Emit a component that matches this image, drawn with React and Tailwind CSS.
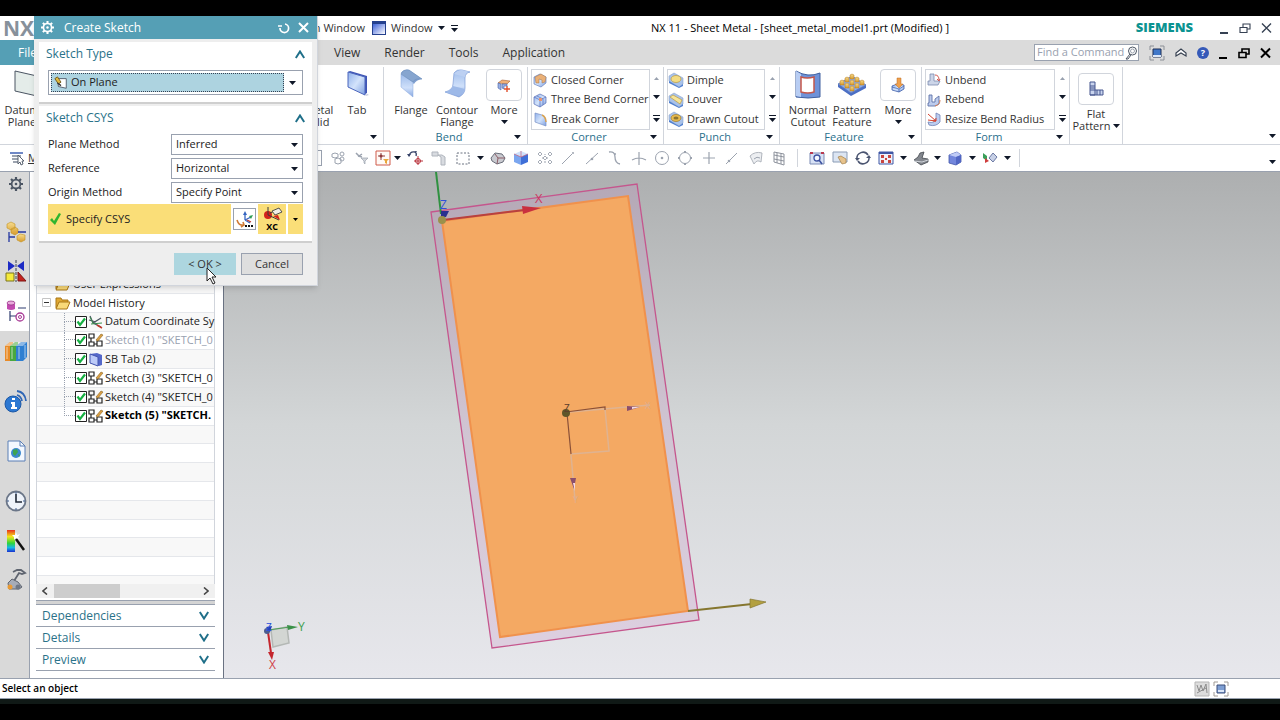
import { useState } from 'react';

/* ---------- small glyphs ---------- */

const Caret = ({ className = 'fill-gray-900' }) => (
  <svg width="7" height="4" viewBox="0 0 7 4" className={className} aria-hidden="true">
    <path d="M0 0h7L3.500 4z" />
  </svg>
);

const CaretUp = () => (
  <svg width="5" height="3" viewBox="0 0 5 3" className="fill-gray-400" aria-hidden="true">
    <path d="M0 3h5L2.500 0z" />
  </svg>
);

const CaretBar = () => (
  <svg width="7" height="7" viewBox="0 0 7 7" className="fill-gray-900" aria-hidden="true">
    <path d="M0 0h7v1H0zM0 3h7L3.500 7z" />
  </svg>
);

const Chevron = ({ up = false }) => (
  <svg width="10" height="9" viewBox="0 0 10 9" fill="none" stroke="#1f6f89" strokeWidth="2" aria-hidden="true">
    <path d={up ? 'M0.800 8L5 1.500L9.200 8' : 'M0.800 1L5 7.500L9.200 1'} />
  </svg>
);

const Svg = ({ size = 16, box = 16, children }) => (
  <svg width={size} height={size} viewBox={`0 0 ${box} ${box}`} fill="none" className="shrink-0" aria-hidden="true">
    {children}
  </svg>
);

const Defs = () => (
  <svg width="0" height="0" className="absolute" aria-hidden="true">
    <defs>
      <linearGradient id="steel" x1="0" y1="0" x2="1" y2="1">
        <stop offset="0" stopColor="#8fb0ea" />
        <stop offset="0.500" stopColor="#d3e3fb" />
        <stop offset="1" stopColor="#7d9fe0" />
      </linearGradient>
      <linearGradient id="steelV" x1="0" y1="0" x2="0" y2="1">
        <stop offset="0" stopColor="#9dbbea" />
        <stop offset="0.600" stopColor="#cfe0fa" />
        <stop offset="1" stopColor="#88a8e2" />
      </linearGradient>
      <linearGradient id="gold" x1="0" y1="0" x2="0" y2="1">
        <stop offset="0" stopColor="#f6dc8e" />
        <stop offset="1" stopColor="#d79b2c" />
      </linearGradient>
      <linearGradient id="spectrum" x1="0" y1="0" x2="0" y2="1">
        <stop offset="0" stopColor="#e8301c" />
        <stop offset="0.300" stopColor="#f5e51b" />
        <stop offset="0.600" stopColor="#2fd43a" />
        <stop offset="0.800" stopColor="#16b7e8" />
        <stop offset="1" stopColor="#1b2fd0" />
      </linearGradient>
      <linearGradient id="glass" x1="0" y1="0" x2="1" y2="1">
        <stop offset="0" stopColor="#3f63d8" />
        <stop offset="1" stopColor="#ffffff" />
      </linearGradient>
    </defs>
  </svg>
);

/* ---------- ribbon icons ---------- */

const DatumPlaneIcon = () => (
  <Svg size={32} box={32}>
    <path d="M9 2l22 5v20L9 22z" fill="#e4ece9" stroke="#4b5563" />
  </Svg>
);

const MetalSolidIcon = () => (
  <Svg size={32} box={32}>
    <path d="M8 6l22 3v13L8 23z" fill="url(#steel)" stroke="#5472b8" />
  </Svg>
);

const TabIcon = () => (
  <Svg size={32} box={32}>
    <path d="M24 27l4-1-2-1z" fill="#b9bfd4" />
    <path d="M7 3l2-1 17 5v17l-2 1z" fill="#3f55b5" />
    <path d="M7 3l17 5v18L7 18z" fill="url(#steel)" stroke="#4c66bd" />
  </Svg>
);

const FlangeIcon = () => (
  <Svg size={32} box={32}>
    <path d="M6 4q3-4 8-3l13 9q-6 1-8 5z" fill="#7f9fd0" />
    <path d="M6 5l12 8v15L6 18z" fill="url(#steelV)" stroke="#8aa8dd" strokeWidth="0.500" />
    <path d="M14 1q-6-1-8 4l12 8q2-4 9-3z" fill="#86a5cf" stroke="#6f90bd" strokeWidth="0.600" />
  </Svg>
);

const ContourIcon = () => (
  <Svg size={32} box={32}>
    <path d="M13 4q3-4 8-3l8 2q-5 1-5 6v10q0 6-6 9L4 23q8-2 8-8z" fill="url(#steelV)" stroke="#7c9bd6" strokeWidth="0.700" />
    <path d="M4 23q6-1 8-6l12 3q-2 5-6 7z" fill="#9db9e8" />
    <path d="M13 5q3-4 8-4l8 2q-5 0-5 5z" fill="#bcd0f2" />
  </Svg>
);

const MoreBendIcon = () => (
  <Svg>
    <path d="M2 6l4-3 8 1-3 3z" fill="#f0b178" stroke="#a45f37" strokeWidth="0.600" />
    <path d="M2 6l3 1v6l-3-2zM6 7h5v2H8v3l-2-1z" fill="#9ab1e4" stroke="#4863aa" strokeWidth="0.600" />
    <path d="M11 9v6M8 12h6" stroke="#e1512e" strokeWidth="1.400" />
  </Svg>
);

const MoreFeatureIcon = () => (
  <Svg>
    <path d="M2 9l5-2 7 1v4l-5 3-7-2z" fill="url(#steel)" stroke="#3e5da8" strokeWidth="0.800" />
    <path d="M2 10l7 2 5-3M9 12v3" stroke="#3e5da8" strokeWidth="0.700" />
    <path d="M7 1h4v6h2l-4 4-4-4h2z" fill="#f0a04b" stroke="#b96a20" strokeWidth="0.500" />
  </Svg>
);

const FlatPatternIcon = () => (
  <Svg>
    <path d="M2 1h5v6H2zM2 7h5v7H2zM7 9h8v5H7z" fill="#c9d4ee" />
    <path d="M2 1h5v13H2zM2 5h5M2 7h5M2 9h13v5H2M9 9v5M12 9v5" stroke="#47578f" />
  </Svg>
);

const NormalCutoutIcon = () => (
  <Svg size={32} box={32}>
    <path d="M4 2q12 7 24 2v24q-12 2-24 0z" fill="#6f92d8" stroke="#40609f" />
    <path d="M4 2q3 2 5 3v23l-5-1z" fill="#b8cdf3" />
    <path d="M9 8q6 2 13 0v15q-6 2-13 0z" fill="#fff" stroke="#c4564a" strokeWidth="1.500" />
  </Svg>
);

const PatternIcon = () => (
  <Svg size={32} box={32}>
    <path d="M2 15l14-8 14 9-15 8z" fill="#8fb0ea" stroke="#4465b5" strokeWidth="0.700" />
    <path d="M2 15l13 9 15-8v3L15 27 2 18z" fill="#4c6fc4" />
    {[[16, 6], [11, 9], [21, 9], [6, 12], [16, 12], [26, 12], [11, 15], [21, 15], [16, 18]].map(([x, y]) => (
      <path key={`${x}-${y}`} d={`M${x - 2} ${y}q2-2 4 0v4h-4z`} fill="url(#gold)" stroke="#b57a24" strokeWidth="0.500" />
    ))}
  </Svg>
);

const CornerIcon = ({ kind }) => (
  <Svg>
    {kind === 'closed' && (
      <>
        <path d="M2 5l6-3 6 3v6l-5 4-7-3z" fill="url(#steel)" stroke="#6a83bd" strokeWidth="0.700" />
        <path d="M3 5l6-3 5 3-1 5-3 1V8L7 7v4H4z" fill="#eab077" stroke="#a9784a" strokeWidth="0.500" />
      </>
    )}
    {kind === 'three' && (
      <>
        <path d="M2 5l6-3 6 3v6l-6 4-6-3z" fill="url(#steel)" stroke="#596fb5" strokeWidth="0.700" />
        <path d="M2 5l6 3v7M8 8l6-3M5 4l6 3v6" stroke="#6079c4" strokeWidth="0.800" />
        <path d="M7 6h3v3H7z" fill="#e79772" />
      </>
    )}
    {kind === 'break' && (
      <>
        <path d="M3 2l7 2q4 2 4 7v4L3 11z" fill="url(#steel)" stroke="#7890c6" strokeWidth="0.700" />
        <path d="M10 4q4 2 4 7" stroke="#d9a24f" strokeWidth="1.500" />
      </>
    )}
  </Svg>
);

const PunchIcon = ({ kind }) => (
  <Svg>
    <path d="M1 4l5-3 9 5v6l-4 3-10-6z" fill="#a9c2ea" stroke="#8ba4cd" strokeWidth="0.600" />
    <path d="M1 9l10 6 4-3v2l-4 2-10-5z" fill="#4f7fd0" />
    {kind === 'dimple' && <ellipse cx="8" cy="7" rx="5" ry="3.500" fill="#f3dc84" stroke="#bd9c3c" strokeWidth="0.700" />}
    {kind === 'louver' && <path d="M2 5l3-2 9 5-2 4z" fill="#f6e49a" stroke="#bd9c3c" strokeWidth="0.700" />}
    {kind === 'drawn' && (
      <>
        <ellipse cx="8" cy="7" rx="5" ry="3.500" fill="#e8bb4e" stroke="#a07a28" strokeWidth="0.700" />
        <ellipse cx="8" cy="7" rx="2.500" ry="1.500" fill="#8b7433" />
      </>
    )}
  </Svg>
);

const FormIcon = ({ kind }) => (
  <Svg>
    {kind === 'unbend' && (
      <>
        <path d="M4 2h4v7h6l-2 4H2V9h2z" fill="#ccd5e8" stroke="#7b8aae" strokeWidth="0.800" />
        <path d="M9 3q4 0 4 5M11 7l2 2 1-2" stroke="#d1574f" />
      </>
    )}
    {kind === 'rebend' && (
      <>
        <path d="M3 3h3v7h3V7l4-3v8l-4 2H2v-3h1z" fill="#bccbec" stroke="#5f73a8" strokeWidth="0.900" />
        <path d="M9 14q5-1 5-6" stroke="#d98058" />
      </>
    )}
    {kind === 'resize' && (
      <>
        <path d="M10 2l4 2v7q-4 5-11 3l-1-3q7 2 8-4z" fill="#bccdf0" stroke="#6f82b5" strokeWidth="0.800" />
        <path d="M2 3l8 7M2 9l8 1M7 10h3V7" stroke="#d6402b" />
      </>
    )}
  </Svg>
);

/* ---------- selection bar icons ---------- */

const gray = '#9ca3af';

const barIcons = {
  menu: (
    <Svg>
      <path d="M1 3h13M3 6h9M3 9h7M4 12h6" stroke="#7e8697" strokeWidth="1.500" />
      <path d="M1 2h13v2H1z" fill="#6f88c6" />
      <path d="M9 5v9l2-2 1 3 2-1-1-3h2z" fill="#fff" stroke="#4b5563" strokeWidth="0.900" />
    </Svg>
  ),
  assembly: (
    <Svg>
      <path d="M2 4l3-1 3 1v3L5 8 2 7zM5 9l3-1 3 1v4l-3 1-3-1z" stroke={gray} />
      <circle cx="12" cy="4" r="2" stroke={gray} />
      <circle cx="12" cy="9" r="2" stroke={gray} />
    </Svg>
  ),
  filterOff: (
    <Svg>
      <path d="M2 3l3 3 3-2M4 6l4 1" stroke={gray} strokeWidth="1.500" />
      <path d="M7 8h7l-3 3v3l-1-1v-2z" fill="#d1d5db" stroke={gray} strokeWidth="0.700" />
    </Svg>
  ),
  filter: (
    <Svg>
      <path d="M1 1h14v14H1z" fill="#fffaf6" stroke="#cf5a4a" />
      <path d="M6 3v7M3 6h7" stroke="#8f3b3b" />
      <circle cx="6" cy="6" r="1.500" fill="#8f3b3b" />
      <path d="M8 9h6l-2 2v3l-2-1v-2z" fill="#e9a63a" />
    </Svg>
  ),
  reset: (
    <Svg>
      <path d="M2 6q1-5 6-4 2 1 1 4M9 2v-1" stroke="#374469" strokeWidth="1.300" />
      <path d="M0 4l2 3 2-3z" fill="#374469" />
      <path d="M11 6v9M7 11h9" stroke="#b9323c" />
      <circle cx="11" cy="11" r="2.500" stroke="#b9323c" />
    </Svg>
  ),
  path: (
    <Svg>
      <path d="M1 2h6v4H1zM7 5l3 2v8h4V7l-3-2z" fill="#d8dbe0" stroke="#b0b5bd" />
    </Svg>
  ),
  marquee: (
    <Svg>
      <path d="M2 3h12v11H2z" stroke="#6b7280" strokeDasharray="2 1.500" />
    </Svg>
  ),
  solid: (
    <Svg>
      <path d="M1 8l4-5 7 1 3 4-2 4-6 2-5-3z" fill="#c9cad0" stroke="#6b6f7b" />
      <path d="M5 4l3 4 7 0M8 8l-1 6" stroke="#8b5d66" />
    </Svg>
  ),
  cube: (
    <Svg>
      <path d="M1 4l7-3 7 3-7 3z" fill="#cfe0fb" />
      <path d="M1 4l7 3v8l-7-3z" fill="#7ba6ef" />
      <path d="M15 4L8 7v8l7-3z" fill="#3f6fd8" />
      <path d="M8 1v6M1 4l7 3 7-3" stroke="#c25b76" strokeWidth="0.700" />
    </Svg>
  ),
  points: (
    <Svg>
      {[[3, 4], [8, 8], [13, 4], [3, 12], [13, 12]].map(([x, y]) => (
        <path key={`${x}-${y}`} d={`M${x - 2} ${y}l2-2 2 2-2 2z`} stroke={gray} strokeWidth="0.900" />
      ))}
      <path d="M5 8h1M10 8h1M8 4v1M8 11v2" stroke={gray} />
    </Svg>
  ),
  endpoint: <Svg><path d="M2 14L12 4" stroke={gray} /><circle cx="13" cy="3" r="1" fill={gray} /></Svg>,
  midpoint: <Svg><path d="M2 14L14 3" stroke={gray} /><circle cx="8" cy="9" r="1.300" fill={gray} /></Svg>,
  spline: <Svg><path d="M2 2q6-1 6 5t5 7" stroke={gray} strokeWidth="1.300" /><circle cx="8" cy="4" r="1" fill={gray} /></Svg>,
  intersect: <Svg><path d="M8 2v13M1 10q7-4 14 0" stroke={gray} strokeWidth="1.200" /></Svg>,
  center: <Svg><circle cx="8" cy="8" r="6.500" stroke={gray} /><circle cx="8" cy="8" r="1.300" fill={gray} /></Svg>,
  quadrant: (
    <Svg>
      <circle cx="8" cy="8" r="5.500" stroke={gray} />
      <path d="M7 1h2v2H7zM7 13h2v2H7zM1 7h2v2H1zM13 7h2v2h-2z" fill={gray} />
    </Svg>
  ),
  existing: <Svg><path d="M8 2v12M2 8h12" stroke={gray} strokeWidth="1.200" /></Svg>,
  onCurve: <Svg><path d="M2 14L13 3" stroke={gray} /><circle cx="5" cy="11" r="1.300" fill={gray} /></Svg>,
  onFace: (
    <Svg>
      <path d="M2 6q5-5 12-3l-1 9q-4-3-7 2z" fill="#eceef1" stroke="#b0b5bd" />
      <path d="M6 9q3-3 6-1" stroke={gray} />
    </Svg>
  ),
  grid: <Svg><path d="M3 2l10 2v11L3 12zM6 3v10M10 3v11M3 5l10 2M3 9l10 2" stroke="#8d929c" /></Svg>,
  fit: (
    <Svg>
      <path d="M1 3h14v11H1z" fill="#d8e2f5" stroke="#7b8bb5" />
      <path d="M1 2h3v2H1zM12 2h3v2h-3z" fill="#b93a50" />
      <circle cx="8" cy="8" r="3" fill="#f4f8ff" stroke="#3d52a0" strokeWidth="1.300" />
      <path d="M10 10l3 4" stroke="#3d52a0" strokeWidth="1.500" />
    </Svg>
  ),
  pan: (
    <Svg>
      <path d="M1 2h14v10H1z" fill="#dce5f2" stroke="#8a9bb5" />
      <path d="M6 7l3-1 5 3v4l-4 1z" fill="#e7c38c" stroke="#a37f49" strokeWidth="0.700" />
    </Svg>
  ),
  rotate: (
    <Svg>
      <path d="M13 5A6 6 0 0 0 2 9M3 11A6 6 0 0 0 14 7" stroke="#4a5470" strokeWidth="1.500" />
      <path d="M0 8l2 3 3-3zM11 8l3-3 2 3z" fill="#4a5470" />
    </Svg>
  ),
  views: (
    <Svg>
      <path d="M1 2h14v12H1z" fill="#eef2fa" stroke="#3f57a5" />
      <path d="M1 2h14v2H1z" fill="#3f57a5" />
      <path d="M3 5h3v3H3zM10 5h3v3h-3zM3 10h3v3H3zM10 10h3v3h-3z" fill="#c8453f" />
      <path d="M7 8h2v2H7z" fill="#c8453f" />
    </Svg>
  ),
  shaded: (
    <Svg>
      <path d="M1 10l4-3 2-4 4-1-2 6 6 1v3l-7 3z" fill="#83878e" stroke="#43474e" strokeWidth="0.800" />
      <path d="M1 11l8 1 6-2" stroke="#d1d5db" />
    </Svg>
  ),
  render: (
    <Svg>
      <path d="M2 5l8-3 4 3v7l-5 3-7-2z" fill="#7286dc" stroke="#4357a8" strokeWidth="0.800" />
      <path d="M2 5l8-3 4 3-5 2z" fill="#bfcbf6" />
      <path d="M9 7l5-2v7l-5 3z" fill="#5166c4" />
    </Svg>
  ),
  section: (
    <Svg>
      <path d="M1 3l4 3v5l-4-3z" fill="#3aa05a" />
      <path d="M3 8l4 3-4 2z" fill="#cf3d3d" />
      <path d="M7 8l4-5 4 4-4 5z" fill="#c7d0e6" stroke="#6d7aa4" />
    </Svg>
  ),
};

const snapIcons = [
  'solid', 'cube', 'points', 'endpoint', 'midpoint', 'spline', 'intersect',
  'center', 'quadrant', 'existing', 'onCurve', 'onFace', 'grid',
];

const BarButton = ({ name, className = 'w-6' }) => (
  <button type="button" aria-label={name} className={`flex items-center justify-center ${className}`}>
    {barIcons[name]}
  </button>
);

const BarDrop = ({ name }) => (
  <button type="button" aria-label={`${name} options`} className="flex w-[11px] items-center justify-center">
    <Caret />
  </button>
);

/* ---------- title bar and tabs ---------- */

const WindowControls = ({ strong = false }) => (
  <div className={`flex items-center gap-[10px] ${strong ? 'text-black' : 'text-gray-700'}`}>
    <button type="button" aria-label="Minimize">
      <svg width="9" height="12" viewBox="0 0 9 12" fill="none" stroke="currentColor" strokeWidth="2" aria-hidden="true">
        <path d="M0 11h8" />
      </svg>
    </button>
    <button type="button" aria-label="Restore">
      <svg width="12" height="12" viewBox="0 0 12 12" fill="none" stroke="currentColor" strokeWidth={strong ? 1.6 : 1.1} aria-hidden="true">
        <path d="M1 5.500h7v5H1zM4 5V2h7v5H8" />
      </svg>
    </button>
    <button type="button" aria-label="Close">
      <svg width="11" height="12" viewBox="0 0 11 12" fill="none" stroke="currentColor" strokeWidth={strong ? 2 : 1.4} aria-hidden="true">
        <path d="M1 1.500l9 9M10 1.500l-9 9" />
      </svg>
    </button>
  </div>
);

const TitleBar = () => (
  <header className="flex h-6 items-center bg-white text-[11px]">
    <div className="flex w-1/2 items-center">
      <span className="w-[200px] pl-[3px] text-[21px] leading-6 font-bold text-[#87919b]">NX</span>
      <button type="button" className="w-[165px] text-right">Switch Window</button>
      <button type="button" className="ml-[7px] flex items-center gap-[5px]">
        <svg width="14" height="14" viewBox="0 0 14 14" aria-hidden="true">
          <path d="M0 0h14v14H0z" fill="#24408e" />
          <path d="M1 3h12v10H1z" fill="url(#glass)" />
        </svg>
        Window
        <Caret />
      </button>
      <button type="button" aria-label="Toolbar options" className="ml-[6px]"><CaretBar /></button>
    </div>
    <h1 className="pl-[11px] whitespace-nowrap text-black">NX 11 - Sheet Metal - [sheet_metal_model1.prt (Modified) ]</h1>
    <div className="ml-auto flex items-center gap-[27px] pr-2">
      <span className="text-[13px] font-extrabold text-[#0b9391]">SIEMENS</span>
      <WindowControls />
    </div>
  </header>
);

const tabs = ['View', 'Render', 'Tools', 'Application'];

const TabBar = () => (
  <div className="flex h-[25px] items-center bg-[#dbdbdb] text-xs text-[#333]">
    <div className="h-full w-[334px]">
      <button type="button" className="h-full w-14 bg-[#559fb5] pl-[18px] text-left text-white">File</button>
    </div>
    <nav className="flex gap-6">
      {tabs.map((tab) => (
        <button key={tab} type="button">{tab}</button>
      ))}
    </nav>
    <div className="ml-auto flex items-center gap-[10px] pr-[9px]">
      <label className="flex h-[17px] w-[105px] items-center border border-gray-400 bg-white pr-px">
        <input
          type="text"
          aria-label="Find a Command"
          placeholder="Find a Command"
          className="w-0 flex-1 pl-[2px] text-[11px] placeholder:text-gray-400 focus:outline-none"
        />
        <svg width="12" height="14" viewBox="0 0 12 14" fill="none" stroke="#4b5563" aria-hidden="true">
          <circle cx="7.500" cy="5" r="4" />
          <circle cx="7.500" cy="5" r="2" stroke="#9ca3af" />
          <path d="M5 8l-4 5 2 0 3-4" />
        </svg>
      </label>
      <button type="button" aria-label="Full screen">
        <Svg>
          <path d="M1 5V1h4M11 1h4v4M15 11v4h-4M5 15H1v-4" stroke="#8b8f96" />
          <path d="M4 4h8v8H4z" fill="#3f77c9" stroke="#1f2f55" />
          <path d="M4 10h8v2H4z" fill="#dbe6f7" />
        </Svg>
      </button>
      <button type="button" aria-label="Minimize ribbon">
        <svg width="12" height="10" viewBox="0 0 12 10" fill="#fff" stroke="#374151" strokeWidth="1.200" aria-hidden="true">
          <path d="M1 5l5-4 5 4v3L6 5 1 8z" />
        </svg>
      </button>
      <button type="button" aria-label="Help" className="h-3 w-3 rounded-full bg-[#3559b8] text-[9px] leading-3 font-bold text-white">?</button>
      <WindowControls strong />
    </div>
  </div>
);

/* ---------- ribbon ---------- */

const BigButton = ({ icon, lines, className = '' }) => (
  <button type="button" className={`flex flex-col items-center leading-3 ${className}`}>
    {icon}
    <span className="mt-[3px] whitespace-pre-line">{lines}</span>
  </button>
);

const MoreButton = ({ icon }) => (
  <button type="button" className="ml-1 flex w-10 flex-col items-center leading-3">
    <span className="flex h-8 w-9 items-center justify-center rounded-sm border border-gray-300">{icon}</span>
    <span className="mt-[3px] mb-1">More</span>
    <Caret />
  </button>
);

const RibbonGroup = ({ label, className, children }) => (
  <section className={`flex flex-col border-r border-gray-300 pt-[2px] ${className}`}>
    <div className="flex flex-1">{children}</div>
    <div className="flex h-[14px] items-center text-[#2a6f8c]">
      <span className="flex-1 text-center leading-[14px]">{label}</span>
      <button type="button" aria-label={`${label} options`} className="mr-[6px]"><Caret /></button>
    </div>
  </section>
);

const Gallery = ({ items }) => (
  <>
    <div className="ml-[3px] flex flex-1 flex-col border border-gray-300">
      {items.map(([label, icon]) => (
        <button key={label} type="button" className="flex flex-1 items-center gap-[3px] whitespace-nowrap">
          {icon}
          {label}
        </button>
      ))}
    </div>
    <div className="flex w-[14px] flex-col items-center justify-around">
      <button type="button" aria-label="Scroll up"><CaretUp /></button>
      <button type="button" aria-label="Scroll down"><Caret /></button>
      <button type="button" aria-label="Show all"><CaretBar /></button>
    </div>
  </>
);

const Ribbon = () => (
  <div className="flex h-[80px] border-b border-gray-300 bg-white pt-[2px] text-[11px] text-[#333]">
    <RibbonGroup label="" className="w-96">
      <BigButton icon={<DatumPlaneIcon />} lines={'Datum\nPlane'} className="w-11" />
      <BigButton icon={<MetalSolidIcon />} lines={'Sheet Metal\nfrom Solid'} className="ml-auto w-16" />
      <BigButton icon={<TabIcon />} lines="Tab" className="mr-2 ml-1 w-9" />
    </RibbonGroup>
    <RibbonGroup label="Bend" className="w-36">
      <BigButton icon={<FlangeIcon />} lines="Flange" className="ml-1 w-[46px]" />
      <BigButton icon={<ContourIcon />} lines={'Contour\nFlange'} className="w-[46px]" />
      <MoreButton icon={<MoreBendIcon />} />
    </RibbonGroup>
    <RibbonGroup label="Corner" className="w-[136px]">
      <Gallery
        items={[
          ['Closed Corner', <CornerIcon kind="closed" />],
          ['Three Bend Corner', <CornerIcon kind="three" />],
          ['Break Corner', <CornerIcon kind="break" />],
        ]}
      />
    </RibbonGroup>
    <RibbonGroup label="Punch" className="w-[116px]">
      <Gallery
        items={[
          ['Dimple', <PunchIcon kind="dimple" />],
          ['Louver', <PunchIcon kind="louver" />],
          ['Drawn Cutout', <PunchIcon kind="drawn" />],
        ]}
      />
    </RibbonGroup>
    <RibbonGroup label="Feature" className="w-[142px]">
      <BigButton icon={<NormalCutoutIcon />} lines={'Normal\nCutout'} className="ml-[6px] w-11" />
      <BigButton icon={<PatternIcon />} lines={'Pattern\nFeature'} className="w-11" />
      <MoreButton icon={<MoreFeatureIcon />} />
    </RibbonGroup>
    <RibbonGroup label="Form" className="w-[148px]">
      <Gallery
        items={[
          ['Unbend', <FormIcon kind="unbend" />],
          ['Rebend', <FormIcon kind="rebend" />],
          ['Resize Bend Radius', <FormIcon kind="resize" />],
        ]}
      />
    </RibbonGroup>
    <button type="button" className="flex w-[53px] flex-col items-center border-r border-gray-300 pt-[6px] leading-3">
      <span className="mb-[3px] flex h-8 w-9 items-center justify-center rounded-sm border border-gray-300">
        <FlatPatternIcon />
      </span>
      <span>Flat</span>
      <span className="flex items-center gap-[2px]">Pattern <Caret /></span>
    </button>
    <button type="button" aria-label="Ribbon options" className="mr-1 mb-[6px] ml-auto self-end"><Caret /></button>
  </div>
);

const SelectionBar = () => (
  <div className="flex h-[27px] border-b border-gray-400 bg-white text-[11px]">
    <button type="button" className="flex w-[60px] items-center gap-[3px] pl-[9px]">
      {barIcons.menu}
      <span><u>M</u>enu</span>
    </button>
    <select aria-label="Selection filter" className="my-auto ml-auto h-4 w-[200px] appearance-none border border-gray-400" />
    <div className="flex flex-none pl-1">
      <BarButton name="assembly" />
      <BarButton name="filterOff" />
      <BarButton name="filter" className="w-[18px]" />
      <BarDrop name="filter" />
      <BarButton name="reset" />
      <BarButton name="path" />
      <BarButton name="marquee" />
      <BarDrop name="marquee" />
    </div>
    <div className="flex w-[305px] flex-none">
      {snapIcons.map((name) => (
        <BarButton key={name} name={name} className="flex-1" />
      ))}
    </div>
    <div className="my-1 ml-[6px] flex w-[223px] flex-none border-x border-gray-300 pl-[7px]">
      <BarButton name="fit" className="w-[23px]" />
      <BarButton name="pan" className="w-[23px]" />
      <BarButton name="rotate" className="w-[23px]" />
      <BarButton name="views" />
      <BarDrop name="views" />
      <BarButton name="shaded" className="w-[23px]" />
      <BarDrop name="shaded" />
      <BarButton name="render" />
      <BarDrop name="render" />
      <BarButton name="section" />
      <BarDrop name="section" />
    </div>
    <div className="flex w-[260px] flex-none items-end justify-end pr-1 pb-[7px]"><Caret /></div>
  </div>
);

/* ---------- resource bar ---------- */

const GearIcon = ({ size = 14, color = '#4b5563' }) => (
  <Svg size={size}>
    <circle cx="8" cy="8" r="5" stroke={color} strokeWidth="2" />
    <circle cx="8" cy="8" r="1.500" fill={color} />
    <path d="M8 0v3M8 13v3M0 8h3M13 8h3M2.300 2.300l2 2M11.700 11.700l2 2M2.300 13.700l2-2M11.700 4.300l2-2" stroke={color} strokeWidth="2.500" />
  </Svg>
);

const railItems = [
  { name: 'Options', className: 'h-6', icon: <GearIcon /> },
  {
    name: 'Assembly Navigator',
    className: 'mt-4 h-10',
    icon: (
      <Svg size={22} box={22}>
        <path d="M2 3l4-2 4 2v4L6 9 2 7zM6 8l4-2 3 2v4l-3 2-4-2z" fill="url(#gold)" stroke="#c39220" strokeWidth="0.600" />
        <path d="M4 11v10M4 16h6M13 11h8" stroke="#2437a0" strokeWidth="1.300" />
        <path d="M12 15l3-2 5 1v5l-4 2-4-2z" fill="url(#gold)" stroke="#c39220" strokeWidth="0.600" />
      </Svg>
    ),
  },
  {
    name: 'Constraint Navigator',
    className: 'h-[38px]',
    icon: (
      <Svg size={22} box={22}>
        <path d="M3 1l7 5-7 5zM19 1l-7 5 7 5z" fill="#1c2bc4" />
        <path d="M11 0v22" stroke="#374151" strokeDasharray="3 1" />
        <path d="M1 13h8v8H1z" fill="#f5ea3c" stroke="#7a7420" />
        <path d="M13 12l8 9h-8z" fill="#c4231f" stroke="#7c1512" />
      </Svg>
    ),
  },
  {
    name: 'Part Navigator',
    className: 'h-[41px] bg-white',
    icon: (
      <Svg size={22} box={22}>
        <path d="M2 3v6q4 2 8 0V3z" fill="#c24bb0" />
        <ellipse cx="6" cy="3" rx="4" ry="2" fill="#e9a8dc" stroke="#8f2b80" strokeWidth="0.700" />
        <path d="M5 11v10M5 16h6M13 8h8" stroke="#2f3c70" strokeWidth="1.200" />
        <circle cx="15" cy="17" r="4" stroke="#a83a96" strokeWidth="1.300" />
        <circle cx="15" cy="17" r="1.500" stroke="#a83a96" />
      </Svg>
    ),
  },
  {
    name: 'Reuse Library',
    className: 'h-10',
    icon: (
      <Svg size={22} box={22}>
        <path d="M0 6l5-4h3v19H0z" fill="#e88b28" />
        <path d="M5 6l5-4h3v19H5z" fill="#49a83f" />
        <path d="M11 6l5-4h6v15l-4 4h-7z" fill="#2f7fd1" />
        <path d="M0 6l5-4h17l-4 4z" fill="#fff" fillOpacity="0.450" />
        <path d="M2 7v12M7 7v12M14 7v12M20 5v13" stroke="#fff" strokeOpacity="0.600" />
      </Svg>
    ),
  },
  {
    name: 'HD3D Tools',
    className: 'mt-[5px] h-[50px]',
    icon: (
      <Svg size={24} box={24}>
        <circle cx="9" cy="15" r="8" fill="#2c78d2" stroke="#1d58a5" />
        <path d="M8 9h3v2H8zM7 13h4v5h2v2H7v-2h1v-3H7z" fill="#fff" />
        <path d="M13 6q4 1 5 6M13 2q8 1 9 10" stroke="#2f66b5" strokeWidth="1.800" />
      </Svg>
    ),
  },
  {
    name: 'Web Browser',
    className: 'h-[50px]',
    icon: (
      <Svg size={22} box={22}>
        <path d="M3 1h12l5 5v15H3z" fill="#f3f8ff" stroke="#5b7fb5" />
        <path d="M15 1v5h5" stroke="#5b7fb5" />
        <circle cx="11" cy="13" r="5" fill="#3c88cf" />
        <path d="M8 10l4-1 1 3-3 4-2-2zM13 14l2 1-1 2z" fill="#3fa451" />
      </Svg>
    ),
  },
  {
    name: 'History',
    className: 'h-[50px]',
    icon: (
      <Svg size={22} box={22}>
        <circle cx="11" cy="11" r="9.500" fill="#eef3fa" stroke="#6b7688" strokeWidth="1.800" />
        <path d="M11 4v8h6" stroke="#1f2937" strokeWidth="1.600" />
        <path d="M11 2v2M11 18v2M2 11h2M18 11h2" stroke="#3d5a8a" />
      </Svg>
    ),
  },
  {
    name: 'System Materials',
    className: 'h-[30px]',
    icon: (
      <Svg size={22} box={22}>
        <path d="M2 0h8v22H2z" fill="url(#spectrum)" />
        <path d="M11 9l8 11" stroke="#111" strokeWidth="2.500" />
        <path d="M11 2l1 3 3-1-2 3 2 2-4-1-2 2V7L7 5h3z" fill="#fff" />
      </Svg>
    ),
  },
  {
    name: 'Process Studio',
    className: 'h-12',
    icon: (
      <Svg size={22} box={22}>
        <path d="M8 3l4-2h4l4 3-3 1-3-1-5 8 3 4" stroke="#5f6570" strokeWidth="1.800" />
        <path d="M3 14l4-4 6 3 4 5-3 2H4z" fill="#a6acb8" stroke="#5f6570" />
        <circle cx="5" cy="18" r="2.500" fill="#e99a33" />
        <circle cx="13" cy="18" r="2.500" fill="#6f7785" />
      </Svg>
    ),
  },
];

const ResourceBar = () => (
  <aside className="flex w-[30px] flex-none flex-col border-r border-gray-400 bg-[#d9d9d9]">
    {railItems.map((item) => (
      <button
        key={item.name}
        type="button"
        aria-label={item.name}
        className={`flex flex-none items-center justify-center pl-[2px] ${item.className}`}
      >
        {item.icon}
      </button>
    ))}
  </aside>
);

/* ---------- part navigator ---------- */

const FolderIcon = () => (
  <Svg>
    <path d="M1 13V3h5l1 2h6v2" fill="#e0a832" stroke="#a87616" />
    <path d="M1 14l3-7h11l-3 7z" fill="#f9d978" stroke="#a87616" />
  </Svg>
);

const CheckBox = () => (
  <svg width="12" height="12" viewBox="0 0 12 12" fill="none" className="shrink-0" aria-hidden="true">
    <path d="M0.500 0.500h11v11H0.500z" fill="#fff" stroke="#222" />
    <path d="M2.500 5.500L5 9l5-6.500" stroke="#17b043" strokeWidth="2.200" />
  </svg>
);

const treeIcons = {
  datum: (
    <Svg>
      <path d="M2 2l3 7 8-5M5 9l8 4M1 6l7 2" stroke="#4b5563" strokeWidth="1.300" />
      <path d="M3 10l11-1M5 9l-3-6" stroke="#3a8f4c" />
      <path d="M9 11l5 3" stroke="#c0392b" strokeWidth="1.500" />
    </Svg>
  ),
  sketch: (
    <Svg>
      <path d="M1 2h5v4H1zM1 10h5v4H1zM9 9h5v5H9zM3 6v4M6 12h3" stroke="#222" strokeWidth="1.200" />
      <path d="M8 8l5-6 2 1-5 6z" fill="#dba046" stroke="#8b6420" strokeWidth="0.600" />
    </Svg>
  ),
  tab: (
    <Svg>
      <path d="M2 3l7-1 5 2v10l-3 1-9-3z" fill="#5568c9" />
      <path d="M2 3l8 3v9l-8-3z" fill="#bccaf8" stroke="#4455b0" />
    </Svg>
  ),
};

const treeRows = [
  {}, {}, {}, {},
  { folder: 'User Expressions' },
  { folder: 'Model History', open: true },
  { label: 'Datum Coordinate Sy', icon: 'datum' },
  { label: 'Sketch (1) "SKETCH_0', icon: 'sketch', className: 'text-gray-400' },
  { label: 'SB Tab (2)', icon: 'tab' },
  { label: 'Sketch (3) "SKETCH_0', icon: 'sketch' },
  { label: 'Sketch (4) "SKETCH_0', icon: 'sketch' },
  { label: 'Sketch (5) "SKETCH.', icon: 'sketch', className: 'font-bold text-black', last: true },
  {}, {}, {}, {}, {}, {}, {}, {},
];

const TreeRow = ({ row }) => (
  <li className="flex items-center border-b border-gray-200 whitespace-nowrap odd:bg-[#f8f8f8]">
    {row.folder && (
      <>
        <span className="flex w-[18px] flex-none justify-center">
          {row.open && (
            <svg width="9" height="9" viewBox="0 0 9 9" fill="#fff" aria-hidden="true">
              <path d="M0.500 0.500h8v8h-8z" stroke="#c4c4c4" />
              <path d="M2 4.500h5" stroke="#333" />
            </svg>
          )}
        </span>
        <FolderIcon />
        <span className="pl-[2px]">{row.folder}</span>
      </>
    )}
    {row.label && (
      <>
        <span className="ml-[27px] flex h-full w-[11px] flex-none flex-col">
          <span className="h-1/2 border-b border-l border-dotted border-gray-400" />
          <span className={`h-1/2 border-dotted border-gray-400 ${row.last ? '' : 'border-l'}`} />
        </span>
        <CheckBox />
        <span className="ml-px">{treeIcons[row.icon]}</span>
        <span className={`pl-px ${row.className || ''}`}>{row.label}</span>
      </>
    )}
  </li>
);

const PartNavigator = () => (
  <aside className="flex w-[194px] flex-none flex-col border-r border-gray-500 bg-white pt-7 pr-2 pl-[6px] text-[11px] text-[#222]">
    <ul className="grid min-h-0 flex-1 auto-rows-fr border-x border-gray-300">
      {treeRows.map((row, i) => <TreeRow key={i} row={row} />)}
    </ul>
    <div className="h-2 flex-none border-x border-gray-300 bg-[#f8f8f8]" />
    <div className="flex h-[14px] flex-none items-center bg-[#f0f0f0] px-[6px]">
      <svg width="6" height="8" viewBox="0 0 6 8" fill="none" stroke="#444" strokeWidth="1.600" aria-hidden="true"><path d="M5 0.500L1 4l4 3.500" /></svg>
      <span className="ml-[6px] h-full w-[66px] bg-[#cdcdcd]" />
      <svg width="6" height="8" viewBox="0 0 6 8" fill="none" stroke="#444" strokeWidth="1.600" className="ml-auto" aria-hidden="true"><path d="M1 0.500L5 4L1 7.500" /></svg>
    </div>
    <div className="mt-[2px] h-[5px] flex-none border-y border-gray-400 bg-[#d4d4d4]" />
    {['Dependencies', 'Details', 'Preview'].map((name) => (
      <button
        key={name}
        type="button"
        className="flex h-[22px] flex-none items-center justify-between border-b border-gray-400 px-[6px] text-xs text-[#2a7289]"
      >
        {name}
        <Chevron />
      </button>
    ))}
    <div className="h-[7px] flex-none" />
  </aside>
);

/* ---------- graphics window ---------- */

const Viewport = () => (
  <main className="min-w-0 flex-1 overflow-hidden bg-linear-to-b from-[#adafb0] via-[#d3d6d7] to-[#e7e7ec]">
    <svg className="h-full w-full" viewBox="224 172 1056 506" preserveAspectRatio="xMinYMin meet" fill="none" role="img" aria-label="Sheet metal model">
      {/* sketch plane and tab face */}
      <path d="M431 212L637 184L699 620L492 648Z" fill="#c98fc4" fillOpacity="0.250" stroke="#c5568d" strokeWidth="1.300" />
      <path d="M442 221L628 196L688 611L500 637Z" fill="#f4a963" stroke="#f0914c" strokeWidth="2" />

      {/* sketch csys */}
      <path d="M436 172L441 214" stroke="#2f9140" strokeWidth="2" />
      <path d="M443 220L525 210" stroke="#b8403f" strokeWidth="2" />
      <path d="M522 206L541 208L523 214Z" fill="#c9303f" />
      <path d="M441 211l8 0-3 6h-5z" fill="#28308f" />
      <circle cx="442" cy="220" r="4" fill="#9a914b" />
      <text x="440" y="209" fontSize="12" fill="#2f50d8">Z</text>
      <text x="535" y="203" fontSize="13" fill="#cc3a62">X</text>

      {/* part origin */}
      <path d="M570 412L650 405M571 455L575 500M571 454L609 451L605 409" stroke="#dfb391" strokeWidth="1.500" />
      <path d="M566 412L605 407V410M567 413L571 454" stroke="#8a5038" strokeWidth="1.200" />
      <path d="M627 406L640 407L627 411ZM570 478h6l-2 11z" fill="#8c4f6c" />
      <path d="M632 407l8 0-8 2zM573 483h2l0 8z" fill="#f3dbe4" />
      <circle cx="566" cy="413" r="4" fill="#5e5629" />
      <text x="564" y="412" fontSize="10" fill="#5c3d2c">Z</text>
      <text x="645" y="409" fontSize="9" fill="#dcae93">X</text>
      <text x="573" y="503" fontSize="9" fill="#dcae93">Y</text>

      {/* direction handle */}
      <path d="M688 611L752 604" stroke="#85762f" strokeWidth="2" />
      <path d="M750 599L766 602L750 608Z" fill="#b3a03f" stroke="#85762f" strokeWidth="0.700" />

      {/* view triad */}
      <path d="M271 630L287 627L289 643L273 647Z" fill="#d3d6d3" stroke="#b4b8b5" strokeWidth="1.500" />
      <path d="M268 630L290 627" stroke="#4c9c56" />
      <path d="M287 625L298 627L288 630Z" fill="#3a9148" />
      <path d="M268 632L271 653" stroke="#c4262e" strokeWidth="2" />
      <path d="M268 652h6l-2 8z" fill="#c4262e" />
      <circle cx="267" cy="631" r="3" fill="#4b5c8f" />
      <path d="M266 627l6-1-2 6z" fill="#2440b8" />
      <text x="266" y="631" fontSize="10" fill="#2b50dd">Z</text>
      <text x="298" y="631" fontSize="12" fill="#3c9e4c">Y</text>
      <text x="269" y="669" fontSize="12" fill="#d04048">X</text>
    </svg>
  </main>
);

/* ---------- create sketch dialog ---------- */

const DialogSection = ({ title, children }) => (
  <section className="border-b-2 border-[#cfcfcf] bg-white px-[9px]">
    <h3 className="-mx-[2px] flex h-6 items-center justify-between text-xs text-[#2a7289]">
      {title}
      <button type="button" aria-label={`Collapse ${title}`}><Chevron up /></button>
    </h3>
    {children}
  </section>
);

const Field = ({ id, label, options }) => {
  const [value, setValue] = useState(options[0]);

  return (
    <div className="flex h-[21px] items-center">
      <label htmlFor={id} className="flex-1">{label}</label>
      <span className="grid h-full w-[132px] items-center border border-gray-400">
        <select
          id={id}
          value={value}
          onChange={(e) => setValue(e.target.value)}
          className="col-start-1 row-start-1 h-full w-full appearance-none pl-1 focus:outline-none"
        >
          {options.map((option) => <option key={option}>{option}</option>)}
        </select>
        <span className="pointer-events-none col-start-1 row-start-1 mr-1 justify-self-end"><Caret /></span>
      </span>
    </div>
  );
};

const CreateSketchDialog = () => (
  <div role="dialog" aria-label="Create Sketch" className="absolute top-4 left-[34px] w-[284px] border-r border-b border-gray-300 bg-[#eeeeee] text-[11px] text-[#222] shadow-md">
    <div className="flex h-[23px] items-center bg-[#559fb5] pr-2 pl-[7px] text-xs text-white">
      <GearIcon size={13} color="#fff" />
      <h2 className="ml-[10px] flex-1">Create Sketch</h2>
      <button type="button" aria-label="Reset" className="mr-2">
        <svg width="12" height="12" viewBox="0 0 12 12" fill="none" stroke="#fff" strokeWidth="1.700" aria-hidden="true">
          <path d="M7 2A4.300 4.300 0 1 1 2 6M0 4h4" />
        </svg>
      </button>
      <button type="button" aria-label="Close dialog">
        <svg width="11" height="11" viewBox="0 0 11 11" fill="none" stroke="#fff" strokeWidth="2" aria-hidden="true"><path d="M1 1l9 9M10 1l-9 9" /></svg>
      </button>
    </div>

    <div className="mx-[5px] mt-[3px] flex flex-col gap-[2px]">
      <DialogSection title="Sketch Type">
        <div className="mt-1 mb-[7px] grid h-[25px] grid-cols-[1fr_16px] items-center border border-gray-400 p-[2px]">
          <select
            aria-label="Sketch Type"
            className="col-start-1 row-start-1 h-[19px] w-full appearance-none border border-dotted border-gray-700 bg-[#add3e0] pl-[19px]"
          >
            <option>On Plane</option>
            <option>On Path</option>
          </select>
          <span className="pointer-events-none col-start-1 row-start-1 ml-[3px]">
            <Svg size={14}>
              <path d="M4 3h10v11l-9-2z" fill="#fff" stroke="#4b5563" />
              <path d="M1 3l3-2 4 6-3 2z" fill="#e0b93e" stroke="#6b5314" />
              <path d="M4 8l4 3" stroke="#333" strokeWidth="1.500" />
            </Svg>
          </span>
          <span className="pointer-events-none justify-self-center"><Caret /></span>
        </div>
      </DialogSection>

      <DialogSection title="Sketch CSYS">
        <div className="mt-1 flex flex-col gap-[3px]">
          <Field id="plane-method" label="Plane Method" options={['Inferred', 'New Plane']} />
          <Field id="reference" label="Reference" options={['Horizontal', 'Vertical']} />
          <Field id="origin-method" label="Origin Method" options={['Specify Point', 'Use Work Part Origin']} />
        </div>
        <div className="mt-px flex h-[37px] items-center gap-[2px] pb-[7px]">
          <span className="flex h-full flex-1 items-center gap-[5px] bg-[#fade78] pl-[2px]">
            <svg width="11" height="12" viewBox="0 0 11 12" fill="#2fb52f" aria-hidden="true">
              <path d="M0 7l2-2 2 3 5-8 2 1-6 11z" />
            </svg>
            Specify CSYS
          </span>
          <button type="button" aria-label="CSYS dialog" className="flex h-[22px] w-[23px] items-center justify-center border border-gray-400 bg-white">
            <Svg size={18} box={18}>
              <path d="M9 10V3M9 10l6-3M9 10l5 3" stroke="#3565c0" strokeWidth="1.300" />
              <path d="M7 5l2-4 2 4z" fill="#3565c0" />
              <path d="M13 6l4-1-2 4z" fill="#2f9e54" />
              <path d="M11 10l4 2" stroke="#c23a2b" strokeWidth="1.300" />
              <path d="M1 10q2 6 6 5M7 12l1 3-3 2" stroke="#d07a35" strokeWidth="1.600" />
              <path d="M9 15h2v2H9zM12 15h2v2h-2zM15 15h2v2h-2z" fill="#111" />
            </Svg>
          </button>
          <button type="button" aria-label="Inferred CSYS" className="flex h-full w-7 flex-col items-center bg-[#fade78] pt-[3px]">
            <svg width="22" height="15" viewBox="0 0 22 15" fill="none" aria-hidden="true">
              <circle cx="7" cy="8" r="4" fill="#d2221c" />
              <path d="M7 8V0M7 8l11 5M9 6l9-4" stroke="#3b3b3b" />
              <path d="M11 4l7-3 3 4-7 3z" fill="#f2efe6" stroke="#55524a" />
              <path d="M12 9l7 4-2-5z" fill="#d2221c" />
            </svg>
            <span className="text-[9px] leading-[9px] font-bold text-black">XC</span>
          </button>
          <button type="button" aria-label="CSYS options" className="flex h-full w-[15px] items-center justify-center bg-[#fade78]">
            <svg width="5" height="3" viewBox="0 0 5 3" aria-hidden="true"><path d="M0 0h5L2.500 3z" /></svg>
          </button>
        </div>
      </DialogSection>
    </div>

    <div className="flex h-[42px] items-center justify-end gap-[5px] pr-[14px] text-[#333]">
      <button type="button" className="h-[22px] w-[62px] bg-[#add6df]">&lt; OK &gt;</button>
      <button type="button" className="h-[22px] w-[62px] border border-gray-400 bg-[#dedede]">Cancel</button>
    </div>

    {/* pointer */}
    <svg width="12" height="18" viewBox="0 0 12 18" className="absolute top-[251px] left-[172px]" aria-hidden="true">
      <path d="M1 1v13l3-3 3 6 2-1-3-6h4z" fill="#fff" stroke="#222" />
    </svg>
  </div>
);

const StatusBar = () => (
  <footer className="flex h-[21px] items-center border-y border-gray-400 bg-white pl-[2px]">
    <span className="text-[10px] font-semibold text-black">Select an object</span>
    <div className="ml-auto flex items-center gap-[3px] pr-[51px]">
      <Svg>
        <path d="M1 1h14v14H1z" fill="#dcdcdc" stroke="#b5b5b5" />
        <path d="M3 4l2 6 2-6 2 6 3-7 1 9M3 12l9-5" stroke="#8c8c8c" />
      </Svg>
      <Svg>
        <path d="M1 5V1h4M11 1h4v4M15 11v4h-4M5 15H1v-4" stroke="#a09a94" />
        <path d="M4 4h8v8H4z" fill="#7f9fd3" stroke="#3b4d78" />
        <path d="M5 9h6v2H5z" fill="#dbe6f7" />
      </Svg>
    </div>
  </footer>
);

const App = () => (
  <div className="relative flex min-h-screen flex-col bg-black pt-4 font-['Open_Sans','Noto_Sans',sans-serif] text-[#333]">
    <Defs />
    <TitleBar />
    <TabBar />
    <Ribbon />
    <SelectionBar />
    <div className="flex flex-1">
      <ResourceBar />
      <PartNavigator />
      <Viewport />
    </div>
    <StatusBar />
    <div className="h-[5px] bg-[#101916]" />
    <div className="h-4 bg-black" />
    <CreateSketchDialog />
  </div>
);

export default App;
